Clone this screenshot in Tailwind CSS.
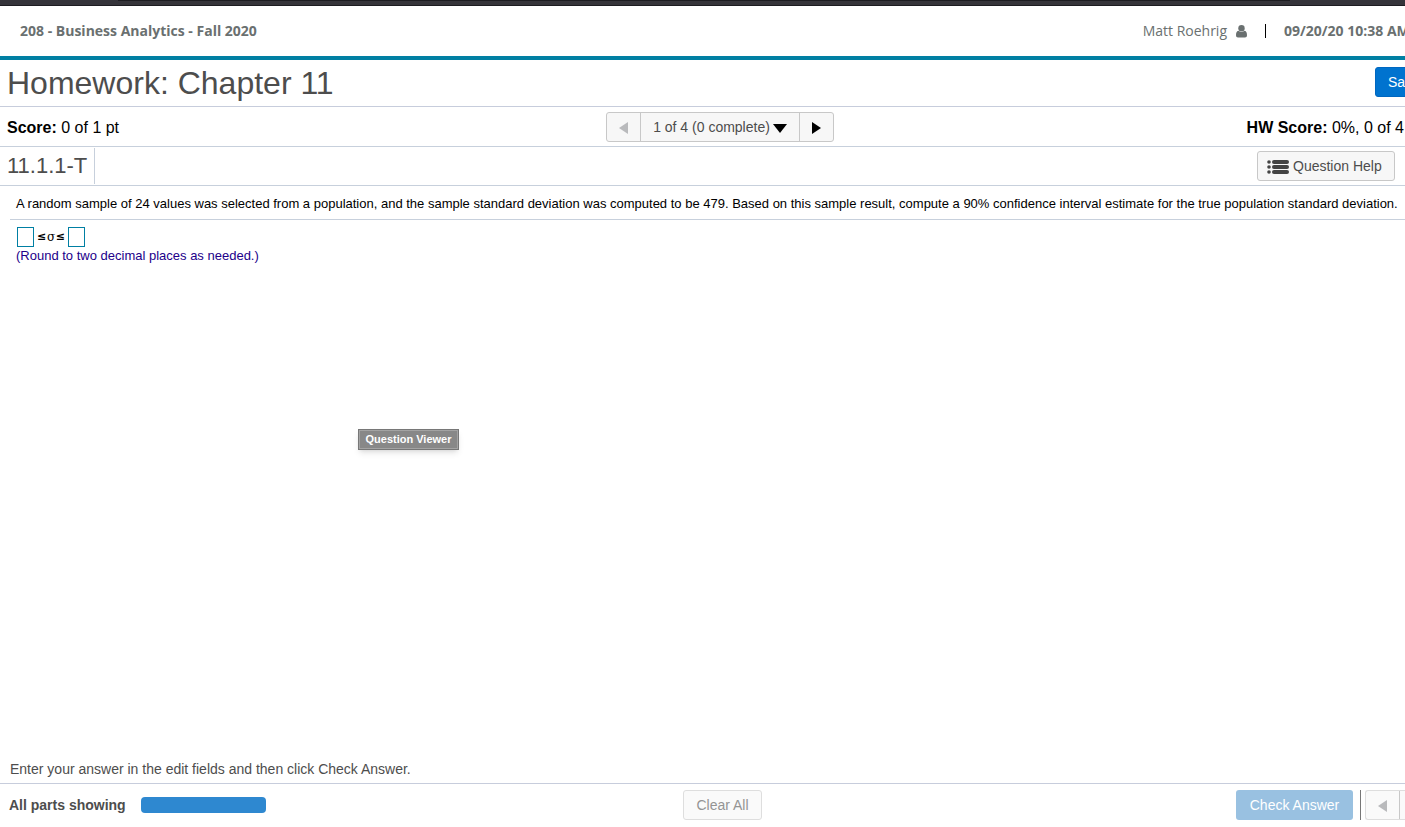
<!DOCTYPE html>
<html lang="en">
<head>
<meta charset="utf-8">
<title>Homework: Chapter 11</title>
<script src="https://cdn.jsdelivr.net/npm/@tailwindcss/browser@4"></script>
</head>
<body class="flex h-screen flex-col overflow-hidden bg-white font-['Liberation_Sans',Arial,sans-serif] text-black">
  <div class="h-[6px] shrink-0 border-b border-[#1d1c21] bg-[#35343a]"><div class="mr-[115px] ml-[118px] h-px bg-[#1d1c21]"></div></div>

  <header class="flex h-[54px] shrink-0 items-center justify-between border-b-4 border-[#007fa3] pl-5 font-['Open_Sans',sans-serif] text-sm whitespace-nowrap text-[#6a7070]">
    <span class="font-bold">208 - Business Analytics - Fall 2020</span>
    <div class="flex items-center">
      <a href="#" class="flex items-center gap-[9px]">Matt Roehrig
        <svg class="h-[13px] w-[11px]" viewBox="0 0 11 13" fill="currentColor" aria-hidden="true"><circle cx="5.5" cy="3.2" r="3.200"/><path d="M2.300 5.800C0.700 6.100 0 7.700 0 10.300C0 11.900 0.800 12.500 2 12.500H9C10.200 12.500 11 11.900 11 10.300C11 7.700 10.300 6.100 8.700 5.800C6.800 7.300 4.200 7.300 2.300 5.800Z"/></svg>
      </a>
      <span class="ml-[18px] h-[14px] w-px bg-black"></span>
      <time class="ml-[18px] w-[121px] font-bold">09/20/20 10:38 AM</time>
    </div>
  </header>

  <div class="flex h-[47px] shrink-0 items-center justify-between border-b border-[#c7cddc] pl-[7px]">
    <h1 class="pb-px text-[32px] leading-10 text-[#4d4d4d]">Homework: Chapter 11</h1>
    <div class="mb-[2px] w-[30px]"><button type="button" class="block h-[30px] w-[58px] rounded-[3px] border border-[#0067c0] bg-[#0073cf] text-sm text-white">Save</button></div>
  </div>

  <div class="grid h-10 shrink-0 grid-cols-[1fr_auto_1fr] items-center border-b border-[#c7d0dc] pl-[7px] text-base whitespace-nowrap">
    <div class="pt-[2px]"><b>Score:</b> 0 of 1 pt</div>
    <nav class="ml-7 flex h-[30px] rounded-[3px] border border-[#c8c8c8] bg-[#f7f7f7] text-sm text-[#4d4d4d]" aria-label="Questions">
      <button type="button" disabled aria-label="Previous question" class="flex w-[34px] items-center justify-center border-r border-[#c8c8c8] pt-[2px]"><svg class="h-3 w-[9px]" viewBox="0 0 9 12" fill="#b9babc"><path d="M9 0V12L0 6Z"/></svg></button>
      <button type="button" class="flex w-[159px] items-center justify-center gap-[3px] border-r border-[#c8c8c8]">1 of 4 (0 complete)<svg class="mt-[3px] h-[9px] w-[14px]" viewBox="0 0 14 9" fill="#000" aria-hidden="true"><path d="M0 0H14L7 9Z"/></svg></button>
      <button type="button" aria-label="Next question" class="flex w-[33px] items-center justify-center pt-[2px]"><svg class="h-3 w-[9px]" viewBox="0 0 9 12" fill="#000"><path d="M0 0V12L9 6Z"/></svg></button>
    </nav>
    <div class="pt-[2px] pr-px text-right"><b>HW Score:</b> 0%, 0 of 4</div>
  </div>

  <div class="flex h-[39px] shrink-0 items-center justify-between border-b border-[#c7d0dc] pr-[10px]">
    <h2 class="h-9 border-r border-[#c7d0dc] pr-[7px] pl-[7px] text-[22px] leading-9 text-[#4d4d4d]">11.1.1-T</h2>
    <button type="button" class="flex h-[30px] w-[138px] items-center gap-1 rounded-[3px] border border-[#c8c8c8] bg-[#f7f7f7] pl-[9px] text-sm whitespace-nowrap text-[#4d4d4d]">
      <svg class="mt-px h-[14px] w-[22px]" viewBox="0 0 22 14" fill="#444" aria-hidden="true"><circle cx="2" cy="2" r="1.800"/><circle cx="2" cy="7" r="1.800"/><circle cx="2" cy="12" r="1.800"/><rect x="5" width="17" height="4" rx="2"/><rect x="5" y="5" width="17" height="4" rx="2"/><rect x="5" y="10" width="17" height="4" rx="2"/></svg>
      Question Help
    </button>
  </div>

  <main class="relative flex grow flex-col text-[13px]">
    <p class="ml-[10px] h-[34px] border-b border-[#c7d0dc] pl-[6px] leading-9 whitespace-nowrap">A random sample of 24 values was selected from a population, and the sample standard deviation was computed to be 479. Based on this sample result, compute a 90% confidence interval estimate for the true population standard deviation.</p>
    <div class="mt-[7px] flex h-5 items-center gap-[3px] pl-[17px]">
      <input type="text" aria-label="Lower limit" class="h-5 w-[17px] border border-[#007fa3]">
      <span class="flex w-7 justify-between font-['DejaVu_Sans',sans-serif] text-[11px] font-bold"><span>≤</span><span class="font-['DejaVu_Serif',serif] text-xs font-normal">σ</span><span>≤</span></span>
      <input type="text" aria-label="Upper limit" class="h-5 w-[17px] border border-[#007fa3]">
    </div>
    <p class="pl-4 leading-[18px] text-[#22008a]">(Round to two decimal places as needed.)</p>
    <div role="tooltip" class="absolute top-[243px] left-[358px] flex h-[21px] w-[101px] items-center justify-center border border-[#777] bg-[#888] text-[11px] font-bold text-white shadow-md inset-ring inset-ring-[#a3a3a3]">Question Viewer</div>
    <p class="mt-auto pl-[10px] text-sm leading-7 text-[#4d4d4d]">Enter your answer in the edit fields and then click Check Answer.</p>
  </main>

  <footer class="grid h-11 shrink-0 grid-cols-[1fr_auto_1fr] items-center border-t border-[#c7cddc] pb-[2px] text-sm whitespace-nowrap">
    <div class="flex items-center gap-[15px] pl-[9px] font-bold text-[#4d4d4d]">All parts showing<div role="progressbar" aria-label="Progress" aria-valuenow="100" class="h-4 w-[125px] rounded bg-[#2e88d0]"></div></div>
    <button type="button" disabled class="ml-10 h-[30px] w-[79px] rounded-[3px] border border-[#dedede] bg-[#fafafa] text-[#949494]">Clear All</button>
    <div class="flex items-center justify-end">
      <button type="button" disabled class="h-[30px] w-[117px] rounded-[3px] bg-[#99c1e1] text-white">Check Answer</button>
      <span class="ml-[7px] h-[30px] w-px bg-[#777]"></span>
      <div class="ml-1 flex h-[30px] w-10 rounded-l-[3px] border border-r-0 border-[#dedede] bg-[#fafafa]">
        <button type="button" disabled aria-label="Previous part" class="flex w-[34px] items-center justify-center border-r border-[#c8c8c8] pt-[2px]"><svg class="h-3 w-[9px]" viewBox="0 0 9 12" fill="#b9babc"><path d="M9 0V12L0 6Z"/></svg></button>
      </div>
    </div>
  </footer>
</body>
</html>
